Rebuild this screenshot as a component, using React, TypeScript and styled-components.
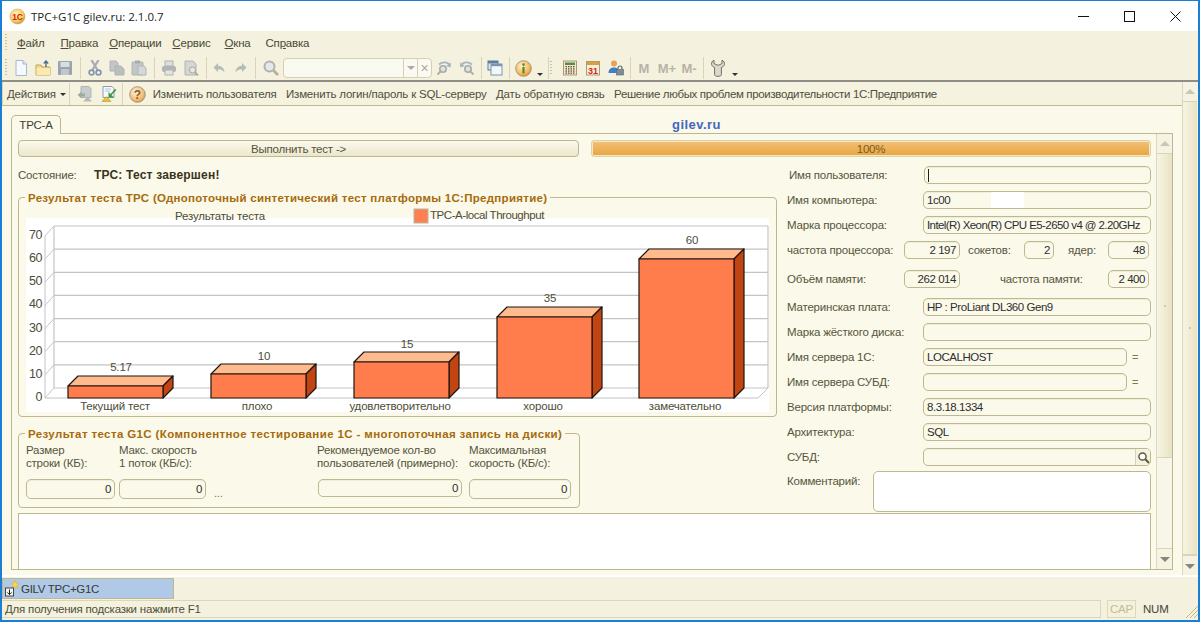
import React from "react";
import styled, { createGlobalStyle } from "styled-components";

const Global = createGlobalStyle`
  html, body { margin: 0; padding: 0; background: #fff; overflow: hidden; }
  * { box-sizing: border-box; }
`;

const FONT = `"Liberation Sans", Arial, sans-serif`;
const LINE = "#bdb88f";

const Win = styled.div`
  width: 1200px; height: 622px; display: flex; flex-direction: column;
  border: 2px solid #1a7fd2; border-top-width: 1px;
  background: #f4f1de; font: 11.5px ${FONT}; letter-spacing: -0.2px; color: #55553c; overflow: hidden;
`;
const TitleBar = styled.div`
  height: 30px; flex: none; background: #fff; display: flex; align-items: center; padding-left: 7px;
`;
const TitleText = styled.div`
  margin-left: 5px; font: 11.5px "Open Sans", sans-serif; letter-spacing: 0; color: #222; flex: 1;
`;
const WinBtn = styled.div`
  width: 46px; display: flex; justify-content: center; align-items: center; height: 30px; flex: none;
`;
const MenuBar = styled.div`
  height: 25px; flex: none; display: flex; align-items: center; padding: 0 0 2px 3px;
`;
const Grip = styled.div<{ $h?: number }>`
  width: 2px; height: ${p => p.$h ?? 18}px; flex: none;
  background: repeating-linear-gradient(to bottom, #c4c0a0 0 1px, transparent 1px 3px);
`;
const MenuItem = styled.div<{ $x: number }>`
  margin-left: ${p => p.$x}px; color: #4a4a35; white-space: nowrap;
`;
const ToolBar = styled.div`
  height: 24px; flex: none; display: flex; align-items: center; padding-left: 3px;
`;
const ToolBtn = styled.div<{ $w?: number }>`
  width: ${p => p.$w ?? 22}px; height: 24px; flex: none; display: flex; align-items: center; justify-content: center;
  font-weight: bold; font-size: 13px; letter-spacing: 0; color: #b6b4a6;
`;
const Sep = styled.div<{ $w?: number }>`
  width: ${p => p.$w ?? 8}px; height: 22px; flex: none; display: flex; justify-content: center;
  &::after { content: ""; width: 1px; background: #d8d4b8; }
`;
const Gap = styled.div<{ $w: number }>`
  width: ${p => p.$w}px; flex: none;
`;
const Combo = styled.div`
  width: 149px; height: 20px; flex: none; margin-left: 1px; border: 1px solid #d4d0b4; border-radius: 4px;
  background: #fbfaf0; display: flex; justify-content: flex-end; align-items: stretch;
`;
const ComboCell = styled.div`
  width: 14px; border-left: 1px solid #d4d0b4; display: flex; align-items: center; justify-content: center; color: #a8a89c; font-size: 14px;
`;
const Arrow = styled.div<{ $c?: string; $up?: boolean; $s?: number }>`
  width: 0; height: 0; flex: none; border-left: ${p => p.$s ?? 4}px solid transparent; border-right: ${p => p.$s ?? 4}px solid transparent;
  ${p => p.$up ? `border-bottom: ${p.$s ?? 4}px solid ${p.$c ?? "#aaa"};` : `border-top: ${p.$s ?? 4}px solid ${p.$c ?? "#aaa"};`}
`;
const DropMark = styled.div<{ $w: number }>`
  width: ${p => p.$w}px; height: 24px; flex: none; display: flex; align-items: flex-end; justify-content: center; padding-bottom: 4px;
`;
const Work = styled.div`
  flex: none; height: 495px; display: flex; border-top: 2px solid #8f8e84;
  padding-right: 1px; background: #f6f3e3;
`;
const Main = styled.div`
  width: 1180px; flex: none; display: flex; flex-direction: column;
`;
const FormBar = styled.div`
  height: 24px; flex: none; display: flex; align-items: center; padding: 1px 0 0 4px; background: #f5f2e0;
  border-bottom: 1px solid ${LINE}; border-left: 1px solid #d8d4b8;
`;
const Action = styled.div<{ $mr?: number; $ls?: number }>`
  margin-right: ${p => p.$mr ?? 9.5}px; white-space: nowrap; color: #4f4f39;
  letter-spacing: ${p => p.$ls ?? -0.2}px;
`;
const FormBody = styled.div`
  flex: 1; background: #fbf9ea; padding: 9px 8px 5px 9px; display: flex; flex-direction: column; min-height: 0;
`;
const TabStrip = styled.div`
  height: 18px; flex: none; display: flex;
`;
const Tab = styled.div`
  width: 50px; height: 19px; border: 1px solid ${LINE}; border-bottom: none; border-radius: 5px 5px 0 0;
  background: #fbf9ea; text-align: center; line-height: 18px; color: #3e3e30; position: relative; z-index: 1;
`;
const Brand = styled.div`
  margin-left: 611px; font: bold 13px ${FONT}; color: #4468c0; letter-spacing: 0.45px; line-height: 20px;
`;
const Panel = styled.div`
  flex: 1; border: 1px solid ${LINE}; display: flex; min-height: 0; width: 1162px;
`;
const Content = styled.div`
  width: 1144px; flex: none; padding: 6px 5px 0 6px; display: flex; flex-direction: column;
`;
const TopRow = styled.div`
  height: 17px; flex: none; display: flex; gap: 12px;
`;
const RunBtn = styled.div`
  width: 561px; border: 1px solid ${LINE}; border-radius: 4px; text-align: center; line-height: 16px; color: #55553c;
  background: linear-gradient(#fbf9ec, #ece7cb);
`;
const Progress = styled.div`
  flex: 1; border: 1px solid #d9d3ab; border-radius: 3px; text-align: center; line-height: 16px; color: #7a5a22;
  background: linear-gradient(#f3c077, #e8a53f); box-shadow: inset 0 0 0 1px #f8e8c4;
`;
const Columns = styled.div`
  margin-top: 8px; height: 348px; flex: none; display: grid; grid-template-columns: 759px 364px; column-gap: 10px;
`;
const LeftCol = styled.div`
  display: flex; flex-direction: column;
`;
const StatusRow = styled.div`
  height: 19px; flex: none; display: flex; align-items: center;
`;
const StatusLabel = styled.div`
  width: 76px;
`;
const StatusValue = styled.div`
  font: bold 12px ${FONT}; color: #3a3320; letter-spacing: 0.2px;
`;
const Group = styled.div<{ $w: number; $h: number; $mt: number }>`
  position: relative; width: ${p => p.$w}px; height: ${p => p.$h}px; margin-top: ${p => p.$mt}px; flex: none;
  border: 1px solid ${LINE}; border-radius: 4px; padding: 7px 7px 0 7px;
`;
const GroupTitle = styled.div<{ $ls: number }>`
  position: absolute; top: -7px; left: 6px; padding: 0 3px; background: #fbf9ea; white-space: nowrap;
  font: bold 11.5px ${FONT}; color: #a66b0c; line-height: 14px; letter-spacing: ${p => p.$ls}px;
`;
const ChartSvg = styled.svg`
  display: block; overflow: visible;
`;
const G1Grid = styled.div`
  display: grid; grid-template-columns: 89px 87px 103px 148px 102px; column-gap: 4px; padding-top: 3px;
`;
const G1Col = styled.div`
  display: flex; flex-direction: column;
`;
const G1Label = styled.div`
  height: 28px; line-height: 13px; white-space: nowrap; margin-bottom: 7px;
`;
const Dots = styled.div`
  padding: 43px 0 0 4px; color: #77775c; font-size: 11px;
`;
const Field = styled.div<{ $w?: number; $right?: boolean; $tight?: boolean; $ml?: number }>`
  height: 18px; flex: ${p => p.$w ? "none" : 1}; width: ${p => p.$w ? `${p.$w}px` : "auto"};
  margin-left: ${p => p.$ml ?? 0}px;
  border: 1px solid ${LINE}; border-radius: 5px; background: #fbf9ea; display: flex; align-items: center;
  justify-content: ${p => p.$right ? "flex-end" : "flex-start"}; padding: 0 3px; color: #2e2e2a; white-space: nowrap;
  box-shadow: inset 0 1px 0 #f1eed8; letter-spacing: ${p => p.$tight ? "-0.58px" : "-0.45px"};
`;
const Caret = styled.div`
  width: 1px; height: 13px; background: #222;
`;
const Masked = styled.div`
  width: 33px; height: 16px; background: #fff; margin-left: 41px;
`;
const SearchCell = styled.div`
  width: 15px; height: 16px; margin-left: auto; margin-right: -3px; border-left: 1px solid #d8d4b8; display: flex; align-items: center; justify-content: center;
  background: #f5f2e0; border-radius: 0 4px 4px 0;
`;
const RightCol = styled.div`
  display: flex; flex-direction: column;
`;
const Row = styled.div<{ $mt: number }>`
  height: 18px; flex: none; display: flex; align-items: center; margin-top: ${p => p.$mt}px;
`;
const Lbl = styled.div<{ $w: number; $pl?: number }>`
  width: ${p => p.$w}px; flex: none; padding-left: ${p => p.$pl ?? 0}px; white-space: nowrap;
`;
const Eq = styled.div`
  margin-left: 5px; color: #77775c; font-size: 11px;
`;
const CommentRow = styled.div`
  margin-top: 5px; height: 41px; flex: none; display: flex;
`;
const CommentLbl = styled.div`
  width: 86px; flex: none; padding-top: 4px;
`;
const CommentBox = styled.div`
  flex: 1; background: #fff; border: 1px solid ${LINE}; border-radius: 5px;
`;
const BigBox = styled.div`
  flex: 1; background: #fff; border: 1px solid ${LINE}; border-bottom: none;
`;
const Scroll = styled.div<{ $w: number }>`
  width: ${p => p.$w}px; flex: none; display: flex; flex-direction: column;
  border-left: 1px solid #dcd8bd; background: #f8f6e9;
`;
const ScrollBtn = styled.div<{ $h: number; $top?: boolean }>`
  height: ${p => p.$h}px; flex: none; display: flex; align-items: center; justify-content: center;
  background: #f6f3e2; ${p => p.$top ? "border-bottom" : "border-top"}: 1px solid #d8d4b8;
`;
const Thumb = styled.div<{ $h: number }>`
  height: ${p => p.$h}px; flex: none; display: flex; align-items: center; justify-content: center;
  background: linear-gradient(to right, #f7f4e2, #e9e3c4); border-bottom: 1px solid #d8d4b8;
`;
const Dot = styled.div`
  width: 2px; height: 2px; border-radius: 50%; background: #c4c0a4;
`;
const Track = styled.div`
  flex: 1;
`;
const WhiteLine = styled.div`
  height: 2px; flex: none; background: #fff;
`;
const TaskBar = styled.div`
  height: 21px; flex: none; margin-top: 1px; display: flex;
`;
const TaskBtn = styled.div`
  width: 172px; height: 21px; background: #b0c9e6; border: 1px solid ${LINE}; display: flex; align-items: center; padding-left: 1px; color: #3a3a34; letter-spacing: -0.3px;
`;
const StatusBar = styled.div`
  height: 18px; flex: none; margin-top: 1px; display: flex; align-items: stretch;
`;
const HintBox = styled.div`
  width: 1099px; flex: none; border: 1px solid #dad6bc; border-left: none; padding-left: 3px; color: #4f4f39; white-space: nowrap; line-height: 17px;
`;
const Cap = styled.div`
  margin-left: 6px; width: 29px; flex: none; border: 1px solid #dcd8bc; text-align: center; line-height: 16px; color: #c3bd90;
`;
const Num = styled.div`
  margin-left: 7px; color: #45453a; width: 28px; line-height: 18px;
`;
const Corner = styled.svg`
  margin-left: 13px; flex: none; align-self: flex-end;
`;

type IP = { children: React.ReactNode; s?: number; w?: number };
const I = ({ children, s = 16, w }: IP) => (
  <svg width={w ?? s} height={s} viewBox={`0 0 ${w ?? s} ${s}`}>{children}</svg>
);

const Logo = () => (
  <svg width="17" height="17" viewBox="0 0 17 17">
    <defs>
      <radialGradient id="lg" cx="40%" cy="35%" r="70%">
        <stop offset="0" stopColor="#fff6b8" /><stop offset="0.7" stopColor="#f4c95a" /><stop offset="1" stopColor="#b98a3a" />
      </radialGradient>
    </defs>
    <circle cx="8.5" cy="8.5" r="7.5" fill="url(#lg)" stroke="#c9a86a" strokeWidth="0.6" />
    <text x="8.5" y="11.5" textAnchor="middle" fontFamily="Liberation Sans" fontWeight="bold" fontSize="8.5" fill="#d5221a">1C</text>
  </svg>
);

const g1 = "#b0b4b4", g2 = "#c2c6c6", g3 = "#9aa4ae";

const Ico = {
  New: () => <I><path d="M3 .5h7l3.5 3.5v11.5H3z" fill="#f6f9fd" stroke="#a4b8d0" /><path d="M10 .5V4h3.5" fill="#dbe6f2" stroke="#a4b8d0" /></I>,
  Open: () => <I><path d="M1 5h5l1 2h8v8H1z" fill="#f3d98c" stroke="#c3a457" /><path d="M1.5 8h13.5v7H1.5z" fill="#fbe9ae" /><path d="M11 7V1.5M8.8 3.5 11 1l2.2 2.5" fill="none" stroke="#4c6f8f" strokeWidth="1.4" /></I>,
  Save: () => <I><rect x="1" y="1" width="14" height="14" rx="1" fill={g3} /><rect x="3.5" y="2" width="9" height="5" fill="#d8dde0" /><rect x="4" y="9" width="8" height="6" fill="#c1c7cc" /></I>,
  Cut: () => <I><path d="M4.500 0 10.500 10M11.500 0 5.500 10" stroke="#a6adb2" strokeWidth="2.2" fill="none" /><circle cx="4.500" cy="12.500" r="2.400" fill="none" stroke="#8496ae" strokeWidth="1.7" /><circle cx="11.500" cy="12.500" r="2.400" fill="none" stroke="#8496ae" strokeWidth="1.7" /></I>,
  Copy: () => <I><path d="M1 1h6l2 2v8H1z" fill={g2} stroke={g1} /><path d="M6 6h6l3 3v6H6z" fill="#b9bebe" stroke={g1} /></I>,
  Paste: () => <I><rect x="1" y="2" width="11" height="13" rx="1" fill={g2} stroke={g1} /><rect x="4" y="0.500" width="5" height="3" fill="#a6abab" /><path d="M7 6h6l2 2v7H7z" fill="#d4d8d8" stroke={g1} /></I>,
  Print: () => <I><rect x="4" y="1" width="8" height="5" fill="#dedfdc" stroke={g1} /><rect x="1" y="6" width="14" height="6" rx="2" fill={g1} /><rect x="4" y="10" width="8" height="5" fill="#e4e4e0" stroke={g1} /></I>,
  Prev: () => <I><path d="M2 1h8l3 3v11H2z" fill="#d4d6d2" stroke={g1} /><circle cx="9.5" cy="10" r="3" fill="#e8e8e4" stroke="#a8a89a" /><path d="M12 12.5 15 15.5" stroke="#b5ac88" strokeWidth="2" /></I>,
  Undo: () => <I><path d="M6 3 1.5 7.5 6 12V9.2c3 0 5 .8 6.5 3.3C12.3 8.5 10 6 6 5.8z" fill="#b3bdb8" /></I>,
  Redo: () => <I><path d="M10 3l4.5 4.5L10 12V9.2c-3 0-5 .8-6.5 3.3C3.7 8.5 6 6 10 5.8z" fill="#b3bdb8" /></I>,
  Find: () => <I><circle cx="6.5" cy="6.5" r="5" fill="#e4e8ea" stroke="#b0b3ae" strokeWidth="2" /><path d="M10.5 10.5 15 15" stroke="#b9b093" strokeWidth="2.6" /></I>,
  FindN: ({ f }: { f?: boolean }) => <I><g transform={f ? undefined : "matrix(-1 0 0 1 16 0)"}><path d="M2 6C3.5 2 9 1 13 4.500" fill="none" stroke="#a8b4be" strokeWidth="1.800" /><path d="M1 2.600 1.400 7.400 5.800 6z" fill="#a8b4be" /><circle cx="9" cy="9" r="3.200" fill="#dce2e6" stroke="#a8aca8" strokeWidth="1.600" /><path d="M11.500 11.500 14.500 14.500" stroke="#b9b093" strokeWidth="2" /></g></I>,
  Wins: () => <I><rect x="1" y="1" width="10" height="9" fill="#dfe8f2" stroke="#5e7d9e" /><rect x="1" y="1" width="10" height="2.400" fill="#5e7d9e" /><rect x="4" y="4" width="11" height="11" fill="#f3f6fa" stroke="#7d96b0" /><rect x="4" y="4" width="11" height="2.200" fill="#7d96b0" /></I>,
  Info: () => (
    <svg width="17" height="17" viewBox="0 0 17 17">
      <defs><radialGradient id="ig" cx="40%" cy="35%" r="70%"><stop offset="0" stopColor="#fff3d0" /><stop offset="0.7" stopColor="#f2b860" /><stop offset="1" stopColor="#d88c2a" /></radialGradient></defs>
      <circle cx="8.500" cy="8.500" r="7.800" fill="url(#ig)" stroke="#9a8a6a" strokeWidth="0.800" />
      <circle cx="8.500" cy="4.600" r="1.300" fill="#5a8a20" /><rect x="7.400" y="6.800" width="2.200" height="6.600" rx="0.600" fill="#5a8a20" />
    </svg>
  ),
  Help: () => (
    <svg width="17" height="17" viewBox="0 0 17 17">
      <defs><radialGradient id="hg" cx="40%" cy="35%" r="70%"><stop offset="0" stopColor="#fff3d8" /><stop offset="0.7" stopColor="#f2bc78" /><stop offset="1" stopColor="#dd9440" /></radialGradient></defs>
      <circle cx="8.500" cy="8.500" r="7.800" fill="url(#hg)" stroke="#8f8a78" strokeWidth="0.800" />
      <text x="8.500" y="12.800" textAnchor="middle" fontFamily="Liberation Sans" fontWeight="bold" fontSize="12" fill="#8a5a2a">?</text>
    </svg>
  ),
  Calc: () => <I><rect x="1.500" y="1" width="13" height="14" fill="#f3e7c6" stroke="#a89c78" /><rect x="3" y="2.500" width="10" height="2.500" fill="#4d8f4d" />{[6.500, 8.700, 10.900, 13].map(y => [3.500, 6, 8.500, 11].map(x => <rect key={`${x}${y}`} x={x} y={y - 0.500} width="1.500" height="1.300" fill="#5c5444" />))}</I>,
  Cal: () => <I><rect x="1.500" y="1.500" width="13" height="13.500" fill="#f6efd9" stroke="#a89c78" /><rect x="2" y="2" width="12" height="3" fill="#d9a03c" /><text x="8" y="13.500" textAnchor="middle" fontFamily="Liberation Sans" fontWeight="bold" fontSize="9" fill="#d8251a">31</text></I>,
  User: () => <I><circle cx="6" cy="3.600" r="3" fill="#e8a257" /><path d="M.5 13c0-4 2.500-5.500 5.500-5.500 2 0 3 .6 3.700 1.400V13z" fill="#3f7fc4" /><rect x="8.500" y="9.500" width="7" height="5.500" fill="#7d8c96" stroke="#5c6670" strokeWidth="0.600" /><path d="M10 9.500V8a2 2 0 0 1 4 0v1.500" fill="none" stroke="#5c6670" strokeWidth="1.200" /></I>,
  Wrench: () => <I s={18} w={14}><path d="M3 1.200v3.400l4 1.800 4-1.800V1.200c2 .9 2.700 2.500 2.400 4.300-.3 1.500-1.500 2.500-3 2.900v7c0 1.300-.9 1.900-3.400 1.900s-3.400-.6-3.400-1.900v-7C2.100 8 .9 7 .6 5.500.3 3.700 1 2.100 3 1.200z" fill="#dad9cb" stroke="#6f7168" strokeWidth="1" /></I>,
  Back: () => <I><path d="M4 0.500h8l2 2v9H4z" fill="#c8ccce" stroke={g1} /><path d="M0.500 9 4.500 5.500V7.500H8V10.500H4.500V12.500z" fill="#9aaea0" /><path d="M6 15.500 10.500 10.500 15 15.500z" fill="#b9bab2" /></I>,
  Import: () => <I><path d="M2 0.500h9l2 2v9H2z" fill="#f6f8fb" stroke="#8a9db2" /><path d="M4 3h6M4 5h5" stroke="#b8c4d0" /><path d="M15.500 4 10.500 9 13 11.500 7.500 11.500 7.500 6 9.500 8 14 3z" fill="#3f9a3c" /><path d="M1 15.500 5.500 10.500 10 15.500z" fill="#ecc03e" stroke="#a88a2c" strokeWidth="0.500" /></I>,
  Task: () => <I s={17}><path d="M11 .5l1.300 2.600 2.700.6-2.200 1.700.6 2.800-2.400-1.500-2.500 1.500.7-2.800-2.100-1.700 2.700-.6z" fill="#f9d94a" stroke="#d8a92c" strokeWidth="0.500" /><rect x="1.500" y="8" width="8" height="8" fill="#f6f6ee" stroke="#444" /><path d="M5.500 9.500v5M3.300 12.400l2.200 2.200 2.200-2.200" fill="none" stroke="#222" /></I>,
  Mag: () => <I s={13}><circle cx="5.500" cy="5.500" r="3.600" fill="#fff" stroke="#5a5a3c" strokeWidth="1.500" /><path d="M8.300 8.300 12 12" stroke="#5a5a3c" strokeWidth="2" /></I>,
};

const BARS = [
  { x: 68, top: 386, v: "5.17", vy: 367, c: "Текущий тест", cx: 115 },
  { x: 211, top: 374, v: "10", vy: 356, c: "плохо", cx: 257 },
  { x: 354, top: 362, v: "15", vy: 344, c: "удовлетворительно", cx: 400 },
  { x: 497, top: 317, v: "35", vy: 298, c: "хорошо", cx: 543 },
  { x: 639, top: 259, v: "60", vy: 240, c: "замечательно", cx: 685 },
];
const TICKS = [70, 60, 50, 40, 30, 20, 10, 0];
const T = styled.text`
  font: 11.5px ${FONT}; letter-spacing: -0.17px; fill: #4d4d38;
`;
const Legend = styled(T)`
  letter-spacing: -0.45px;
`;
const Tick = styled(T)`
  font-size: 12.5px; letter-spacing: -0.4px;
`;

const Chart = () => (
  <ChartSvg width="743" height="207" viewBox="26 205 743 207">
    <rect x="26" y="218" width="743" height="194" fill="#fff" />
    <T x="220" y="220" textAnchor="middle">Результаты теста</T>
    <rect x="414" y="209" width="14" height="14" fill="#ff7f50" stroke="#b8b8a0" />
    <Legend x="430" y="219">TPC-A-local Throughput</Legend>
    {TICKS.map((t, i) => {
      const y = 226 + i * 23.14;
      return (
        <g key={t}>
          <line x1="54" y1={y} x2="768" y2={y} stroke="#c4c4c4" strokeWidth="1.2" />
          <line x1="45" y1={y + 10} x2="54" y2={y} stroke="#c4c4c4" />
          <Tick x="42" y={y + 13} textAnchor="end">{t}</Tick>
        </g>
      );
    })}
    <line x1="54" y1="226" x2="54" y2="388" stroke="#c4c4c4" strokeWidth="1.2" />
    <line x1="45" y1="236" x2="45" y2="398" stroke="#c4c4c4" />
    <line x1="768" y1="226" x2="768" y2="388" stroke="#c4c4c4" strokeWidth="1.2" />
    <line x1="45" y1="398" x2="758" y2="398" stroke="#c4c4c4" strokeWidth="1.2" />
    <line x1="758" y1="398" x2="768" y2="388" stroke="#c4c4c4" />
    {BARS.map(b => {
      const r = b.x + 95;
      return (
        <g key={b.c} stroke="#1e1410" strokeWidth="1.2" strokeLinejoin="round">
          <polygon points={`${b.x},${b.top} ${b.x + 10},${b.top - 10} ${r + 10},${b.top - 10} ${r},${b.top}`} fill="#ffbb8d" />
          <polygon points={`${r},${b.top} ${r + 10},${b.top - 10} ${r + 10},388 ${r},398`} fill="#c04512" />
          <rect x={b.x} y={b.top} width="95" height={398 - b.top} fill="#ff7d4d" />
        </g>
      );
    })}
    {BARS.map(b => (
      <React.Fragment key={b.c}>
        <T x={b.x + 53} y={b.vy + 4} textAnchor="middle">{b.v}</T>
        <T x={b.cx} y="410" textAnchor="middle">{b.c}</T>
      </React.Fragment>
    ))}
  </ChartSvg>
);

const VScroll = ({ up, thumb, down, w }: { up: number; thumb: number; down: number; w: number }) => (
  <Scroll $w={w}>
    <ScrollBtn $h={up} $top><Arrow $up $c="#c8c6b4" $s={5} /></ScrollBtn>
    <Thumb $h={thumb}><Dot /></Thumb>
    <Track />
    <ScrollBtn $h={down}><Arrow $c="#86867c" $s={5} /></ScrollBtn>
  </Scroll>
);

const U = styled.span`
  text-decoration: underline;
`;

export default function App() {
  return (
    <Win>
      <Global />
      <TitleBar>
        <Logo />
        <TitleText>ТРС+G1C gilev.ru: 2.1.0.7</TitleText>
        <WinBtn><svg width="11" height="11"><path d="M0 5.500h11" stroke="#111" /></svg></WinBtn>
        <WinBtn><svg width="11" height="11"><rect x="0.500" y="0.500" width="10" height="10" fill="none" stroke="#111" /></svg></WinBtn>
        <WinBtn><svg width="11" height="11"><path d="M.5.5l10 10M10.500.5l-10 10" stroke="#111" /></svg></WinBtn>
      </TitleBar>
      <MenuBar>
        <Grip />
        <MenuItem $x={10}><U>Ф</U>айл</MenuItem>
        <MenuItem $x={16}><U>П</U>равка</MenuItem>
        <MenuItem $x={11}><U>О</U>перации</MenuItem>
        <MenuItem $x={11}><U>С</U>ервис</MenuItem>
        <MenuItem $x={14}><U>О</U>кна</MenuItem>
        <MenuItem $x={15}>Сп<U>р</U>авка</MenuItem>
      </MenuBar>
      <ToolBar>
        <Grip />
        <Gap $w={3} />
        <ToolBtn><Ico.New /></ToolBtn>
        <ToolBtn><Ico.Open /></ToolBtn>
        <ToolBtn><Ico.Save /></ToolBtn>
        <Sep />
        <ToolBtn><Ico.Cut /></ToolBtn>
        <ToolBtn><Ico.Copy /></ToolBtn>
        <ToolBtn><Ico.Paste /></ToolBtn>
        <Sep />
        <ToolBtn><Ico.Print /></ToolBtn>
        <ToolBtn><Ico.Prev /></ToolBtn>
        <Sep />
        <ToolBtn $w={20}><Ico.Undo /></ToolBtn>
        <ToolBtn $w={20}><Ico.Redo /></ToolBtn>
        <Sep $w={10} />
        <ToolBtn><Ico.Find /></ToolBtn>
        <Combo>
          <ComboCell><Arrow $s={4} /></ComboCell>
          <ComboCell>×</ComboCell>
        </Combo>
        <ToolBtn $w={23}><Ico.FindN /></ToolBtn>
        <ToolBtn $w={23}><Ico.FindN f /></ToolBtn>
        <Sep $w={6} />
        <ToolBtn><Ico.Wins /></ToolBtn>
        <Sep $w={6} />
        <ToolBtn><Ico.Info /></ToolBtn>
        <DropMark $w={12}><Arrow $c="#333" $s={3} /></DropMark>
        <Sep $w={4} />
        <Grip $h={14} />
        <Gap $w={6} />
        <ToolBtn $w={23}><Ico.Calc /></ToolBtn>
        <ToolBtn $w={23}><Ico.Cal /></ToolBtn>
        <ToolBtn $w={23}><Ico.User /></ToolBtn>
        <Sep $w={7} />
        <ToolBtn $w={20}>M</ToolBtn>
        <ToolBtn $w={26}>M+</ToolBtn>
        <ToolBtn $w={18}>M-</ToolBtn>
        <Sep $w={10} />
        <ToolBtn $w={20}><Ico.Wrench /></ToolBtn>
        <DropMark $w={14}><Arrow $c="#333" $s={3} /></DropMark>
      </ToolBar>
      <Work>
        <Main>
          <FormBar>
            <Action $mr={4}>Действия</Action>
            <Arrow $c="#333" $s={3} />
            <Sep $w={8} />
            <ToolBtn $w={22}><Ico.Back /></ToolBtn>
            <ToolBtn $w={26}><Ico.Import /></ToolBtn>
            <Sep $w={1} />
            <ToolBtn $w={30}><Ico.Help /></ToolBtn>
            <Action>Изменить пользователя</Action>
            <Action>Изменить логин/пароль к SQL-серверу</Action>
            <Action>Дать обратную связь</Action>
            <Action $ls={-0.35}>Решение любых проблем производительности 1С:Предприятие</Action>
          </FormBar>
          <FormBody>
            <TabStrip>
              <Tab>ТРС-А</Tab>
              <Brand>gilev.ru</Brand>
            </TabStrip>
            <Panel>
              <Content>
                <TopRow>
                  <RunBtn>Выполнить тест -&gt;</RunBtn>
                  <Progress>100%</Progress>
                </TopRow>
                <Columns>
                  <LeftCol>
                    <StatusRow>
                      <StatusLabel>Состояние:</StatusLabel>
                      <StatusValue>ТРС: Тест завершен!</StatusValue>
                    </StatusRow>
                    <Group $w={759} $h={220} $mt={13}>
                      <GroupTitle $ls={0.29}>Результат теста ТРС (Однопоточный синтетический тест платформы 1С:Предприятие)</GroupTitle>
                      <Chart />
                    </Group>
                    <Group $w={562} $h={75} $mt={16}>
                      <GroupTitle $ls={0.38}>Результат теста G1C (Компонентное тестирование 1С - многопоточная запись на диски)</GroupTitle>
                      <G1Grid>
                        <G1Col>
                          <G1Label>Размер<br />строки (КБ):</G1Label>
                          <Field $right>0</Field>
                        </G1Col>
                        <G1Col>
                          <G1Label>Макс. скорость<br />1 поток (КБ/с):</G1Label>
                          <Field $right>0</Field>
                        </G1Col>
                        <Dots>...</Dots>
                        <G1Col>
                          <G1Label>Рекомендуемое кол-во<br />пользователей (примерно):</G1Label>
                          <Field $right $w={144} $ml={1}>0</Field>
                        </G1Col>
                        <G1Col>
                          <G1Label>Максимальная<br />скорость (КБ/с):</G1Label>
                          <Field $right>0</Field>
                        </G1Col>
                      </G1Grid>
                    </Group>
                  </LeftCol>
                  <RightCol>
                    <Row $mt={1}><Lbl $w={137} $pl={2}>Имя пользователя:</Lbl><Field><Caret /></Field></Row>
                    <Row $mt={7}><Lbl $w={136}>Имя компьютера:</Lbl><Field>1c00<Masked /></Field></Row>
                    <Row $mt={7}><Lbl $w={136}>Марка процессора:</Lbl><Field $tight>Intel(R) Xeon(R) CPU E5-2650 v4 @ 2.20GHz</Field></Row>
                    <Row $mt={7}>
                      <Lbl $w={117}>частота процессора:</Lbl><Field $right $w={56}>2 197</Field>
                      <Lbl $w={64} $pl={8}>сокетов:</Lbl><Field $right $w={30}>2</Field>
                      <Lbl $w={54} $pl={14}>ядер:</Lbl><Field $right $w={41}>48</Field>
                    </Row>
                    <Row $mt={11}>
                      <Lbl $w={117}>Объём памяти:</Lbl><Field $right $w={56}>262 014</Field>
                      <Lbl $w={148} $pl={40}>частота памяти:</Lbl><Field $right $w={41}>2 400</Field>
                    </Row>
                    <Row $mt={10}><Lbl $w={136}>Материнская плата:</Lbl><Field>HP : ProLiant  DL360 Gen9</Field></Row>
                    <Row $mt={7}><Lbl $w={136}>Марка жёсткого диска:</Lbl><Field /></Row>
                    <Row $mt={7}><Lbl $w={136}>Имя сервера 1С:</Lbl><Field $w={204}>LOCALHOST</Field><Eq>=</Eq></Row>
                    <Row $mt={7}><Lbl $w={136}>Имя сервера СУБД:</Lbl><Field $w={204} /><Eq>=</Eq></Row>
                    <Row $mt={7}><Lbl $w={136}>Версия платформы:</Lbl><Field>8.3.18.1334</Field></Row>
                    <Row $mt={7}><Lbl $w={136}>Архитектура:</Lbl><Field>SQL</Field></Row>
                    <Row $mt={7}><Lbl $w={136}>СУБД:</Lbl><Field><SearchCell><Ico.Mag /></SearchCell></Field></Row>
                    <CommentRow>
                      <CommentLbl>Комментарий:</CommentLbl>
                      <CommentBox />
                    </CommentRow>
                  </RightCol>
                </Columns>
                <BigBox />
              </Content>
              <VScroll w={16} up={20} thumb={304} down={21} />
            </Panel>
          </FormBody>
        </Main>
        <VScroll w={15} up={20} thumb={453} down={21} />
      </Work>
      <WhiteLine />
      <TaskBar>
        <TaskBtn><Ico.Task /><span>GILV TPC+G1C</span></TaskBtn>
      </TaskBar>
      <StatusBar>
        <HintBox>Для получения подсказки нажмите F1</HintBox>
        <Cap>CAP</Cap>
        <Num>NUM</Num>
        <Corner width="14" height="14" viewBox="0 0 14 14"><path d="M14 2 2 14M14 6 6 14M14 10l-4 4" stroke="#bdb88f" /></Corner>
      </StatusBar>
    </Win>
  );
}
